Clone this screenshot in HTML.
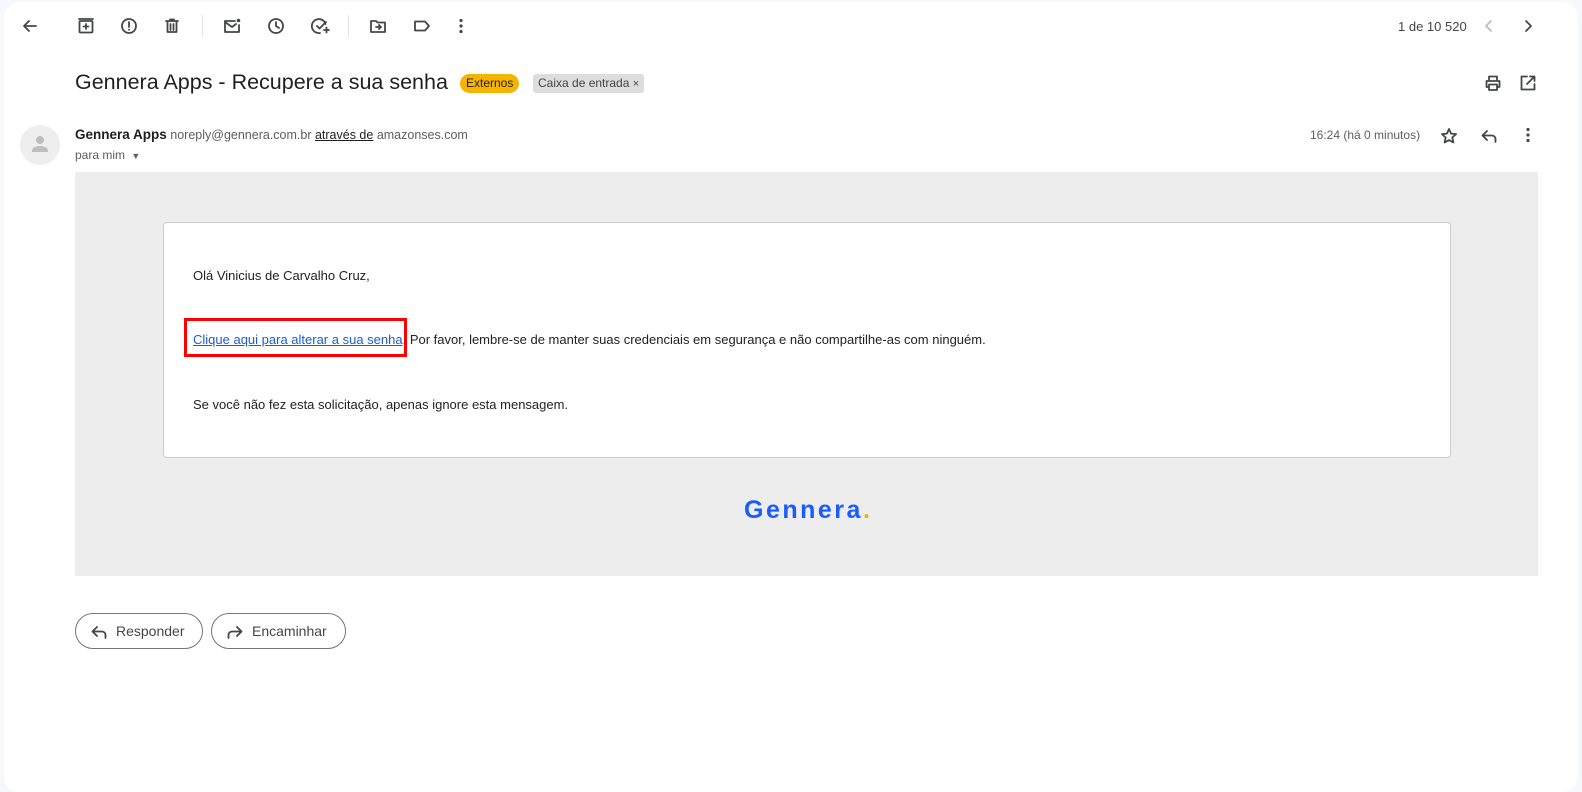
<!DOCTYPE html>
<html><head><meta charset="utf-8"><style>
*{box-sizing:border-box;margin:0;padding:0}
body{width:1582px;height:781px;background:#f6f8fc;font-family:"Liberation Sans",Arial,sans-serif;color:#1f1f1f;overflow:hidden;position:relative}
.card{position:absolute;left:4px;top:2px;width:1574px;height:790px;background:#fff;border-radius:16px}
.ic{position:absolute;width:20px;height:20px}
.ic svg{width:20px;height:20px;fill:none;stroke:#444746;stroke-width:1.8;stroke-linecap:round;stroke-linejoin:round}
.sep{position:absolute;top:15px;width:1px;height:22px;background:#e3e3e3}
.abs{position:absolute;white-space:nowrap}
</style></head><body>
<div class="card"></div>
<div class="ic" style="left:20px;top:16px"><svg viewBox="0 0 20 20"><path d="M16 10H4M9 5l-5 5 5 5"/></svg></div>
<div class="ic" style="left:76px;top:16px"><svg viewBox="0 0 20 20"><rect x="3.5" y="5" width="13" height="11.5" rx="1"/><path d="M3 3h14M10 8v5M7.5 10.5h5"/></svg></div>
<div class="ic" style="left:119px;top:16px"><svg viewBox="0 0 20 20"><circle cx="10" cy="10" r="7"/><path d="M10 6v5M10 13.5v.3"/></svg></div>
<div class="ic" style="left:162px;top:16px"><svg viewBox="0 0 20 20"><path d="M4 5h12M8 3.5h4M5.5 5v11h9V5M8.5 8v6M11.5 8v6"/></svg></div>
<div class="sep" style="left:202px"></div>
<div class="ic" style="left:222px;top:16px"><svg viewBox="0 0 20 20"><path d="M13 5H3v11h14V9"/><path d="M3 6l7 5 4-3"/><circle cx="16.5" cy="4.5" r="1.8" fill="#444746" stroke="none"/></svg></div>
<div class="ic" style="left:266px;top:16px"><svg viewBox="0 0 20 20"><circle cx="10" cy="10" r="7"/><path d="M10 6v4l3 2"/></svg></div>
<div class="ic" style="left:310px;top:16px"><svg viewBox="0 0 20 20"><path d="M15.5 8A7 7 0 1 0 10 17"/><path d="M7 10l2.5 2.5L16 6M14 14h5M16.5 11.5v5"/></svg></div>
<div class="sep" style="left:348px"></div>
<div class="ic" style="left:368px;top:16px"><svg viewBox="0 0 20 20"><path d="M3 5h5l1.5 1.5H17V16H3z"/><path d="M8 11h5M11 9l2 2-2 2"/></svg></div>
<div class="ic" style="left:412px;top:16px"><svg viewBox="0 0 20 20"><path d="M3 5.5h10l4 4.5-4 4.5H3z"/></svg></div>
<div class="ic" style="left:451px;top:16px"><svg viewBox="0 0 20 20"><g fill="#444746" stroke="none"><circle cx="10" cy="4.5" r="1.6"/><circle cx="10" cy="10" r="1.6"/><circle cx="10" cy="15.5" r="1.6"/></g></svg></div>
<div class="abs" style="left:1398px;top:19px;font-size:13px;color:#444746">1 de 10 520</div>
<div class="ic" style="left:1479px;top:16px"><svg viewBox="0 0 20 20" style="stroke:#bbb"><path d="M12 5l-5 5 5 5"/></svg></div>
<div class="ic" style="left:1518px;top:16px"><svg viewBox="0 0 20 20"><path d="M8 5l5 5-5 5"/></svg></div>
<div class="abs" style="left:75px;top:70px;font-size:21.5px;color:#1f1f1f">Gennera Apps - Recupere a sua senha</div>
<div class="abs" style="left:460px;top:74px;height:19px;padding:0 6px;background:#f4b400;border-radius:10px;font-size:12px;line-height:19px;color:#222">Externos</div>
<div class="abs" style="left:533px;top:74px;height:19px;padding:0 5px;background:#dddddd;border-radius:3px;font-size:12px;line-height:19px;color:#444">Caixa de entrada <span style="font-size:11px">×</span></div>
<div class="ic" style="left:1483px;top:73px"><svg viewBox="0 0 20 20"><path d="M6 7V3.5h8V7M6 14H3.5V8h13v6H14M6 11.5h8V17H6z"/></svg></div>
<div class="ic" style="left:1518px;top:73px"><svg viewBox="0 0 20 20"><path d="M9 3.5H3.5v13h13V11M12 3.5h4.5V8M16.5 3.5 9 11"/></svg></div>
<div class="abs" style="left:20px;top:125px;width:40px;height:40px;border-radius:50%;background:#eeeeee"><svg width="40" height="40" viewBox="0 0 40 40"><circle cx="20" cy="15" r="4" fill="#bdbdbd"/><path d="M12 26c0-4 5-5 8-5s8 1 8 5v1H12z" fill="#bdbdbd"/></svg></div>
<div class="abs" style="left:75px;top:127px;font-size:12.5px;color:#5e5e5e"><b style="color:#1f1f1f;font-size:13.5px">Gennera Apps</b> noreply@gennera.com.br <u style="color:#1f1f1f">através de</u> amazonses.com</div>
<div class="abs" style="left:75px;top:148px;font-size:12px;color:#5e5e5e">para mim <span style="font-size:9px;margin-left:3px">▼</span></div>
<div class="abs" style="left:1310px;top:128px;font-size:12px;color:#5e5e5e">16:24 (há 0 minutos)</div>
<div class="ic" style="left:1439px;top:126px"><svg viewBox="0 0 20 20"><path d="M10 3l2.1 4.6 5 .5-3.8 3.4 1.1 5L10 14l-4.4 2.5 1.1-5L2.9 8.1l5-.5z"/></svg></div>
<div class="ic" style="left:1479px;top:126px"><svg viewBox="0 0 20 20"><path d="M8 5 3.5 9.5 8 14M3.5 9.5H13a3.5 3.5 0 0 1 3.5 3.5v3"/></svg></div>
<div class="ic" style="left:1518px;top:125px"><svg viewBox="0 0 20 20"><g fill="#444746" stroke="none"><circle cx="10" cy="4.5" r="1.6"/><circle cx="10" cy="10" r="1.6"/><circle cx="10" cy="15.5" r="1.6"/></g></svg></div>
<div class="abs" style="left:75px;top:172px;width:1463px;height:404px;background:#ededed"></div>
<div class="abs" style="left:163px;top:222px;width:1288px;height:236px;background:#fff;border:1px solid #ccc;border-radius:4px"></div>
<div class="abs" style="left:193px;top:268px;font-size:13px;color:#222">Olá Vinicius de Carvalho Cruz,</div>
<div class="abs" style="left:193px;top:332px;font-size:13px;color:#222"><a style="color:#1a5bd6;text-decoration:underline">Clique aqui para alterar a sua senha</a>. Por favor, lembre-se de manter suas credenciais em segurança e não compartilhe-as com ninguém.</div>
<div class="abs" style="left:184px;top:318px;width:223px;height:39px;border:3px solid #f00"></div>
<div class="abs" style="left:193px;top:397px;font-size:13px;color:#222">Se você não fez esta solicitação, apenas ignore esta mensagem.</div>
<div class="abs" style="left:744px;top:496px;font-size:25px;font-weight:bold;color:#1a5cff;letter-spacing:2.5px">Gennera<span style="color:#f5b000">.</span></div>
<div class="abs" style="left:75px;top:613px;width:128px;height:36px;border:1px solid #747775;border-radius:18px;font-size:14px;line-height:34px;color:#444746;padding-left:40px">Responder</div>
<div class="ic" style="left:89px;top:622px"><svg viewBox="0 0 20 20"><path d="M8 5 3.5 9.5 8 14M3.5 9.5H13a3.5 3.5 0 0 1 3.5 3.5v3"/></svg></div>
<div class="abs" style="left:211px;top:613px;width:135px;height:36px;border:1px solid #747775;border-radius:18px;font-size:14px;line-height:34px;color:#444746;padding-left:40px">Encaminhar</div>
<div class="ic" style="left:225px;top:622px"><svg viewBox="0 0 20 20"><path d="M12 5l4.5 4.5L12 14M16.5 9.5H7a3.5 3.5 0 0 0-3.5 3.5v3"/></svg></div>
</body></html>
